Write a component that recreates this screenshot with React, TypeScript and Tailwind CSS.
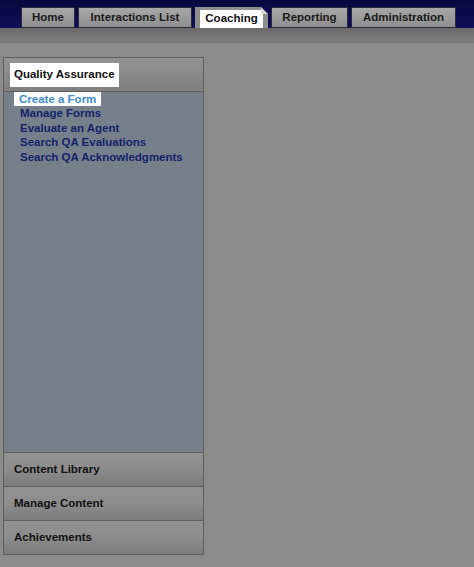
const tabs = [
  { label: 'Home', w: 'w-[54px]' },
  { label: 'Interactions List', w: 'w-[114px]' },
];

const tabsRight = [
  { label: 'Reporting', w: 'w-[77px]' },
  { label: 'Administration', w: 'w-[105px]' },
];

const links = [
  'Manage Forms',
  'Evaluate an Agent',
  'Search QA Evaluations',
  'Search QA Acknowledgments',
];

function Tab({ label, w }: { label: string; w: string }) {
  return (
    <div
      className={`${w} h-[21px] flex items-center justify-center border border-[#2a2a3a] bg-gradient-to-b from-[#a8a8a8] to-[#8e8e8e] text-[11.5px] font-bold text-[#1a1a1a]`}
    >
      {label}
    </div>
  );
}

function Section({ label }: { label: string }) {
  return (
    <div className="h-[34px] flex items-center pl-[10px] border-t border-[#5e5e5e] bg-gradient-to-b from-[#929292] via-[#8c8c8c] to-[#7c7c7c] text-[11.5px] font-bold text-[#111]">
      {label}
    </div>
  );
}

export default function App() {
  return (
    <div className="w-[474px] h-[567px] overflow-hidden bg-[#8b8b8b] font-['Liberation_Sans',Arial,sans-serif]">
      {/* Top navigation */}
      <header className="h-[28px] bg-gradient-to-b from-[#08083e] to-[#0e0e58] flex items-end pl-[21px]">
        <div className="flex items-end gap-[3px]">
          {tabs.map((t) => (
            <Tab key={t.label} {...t} />
          ))}
          <div className="relative w-[73px] h-[21px] bg-[#8e8e8e] flex justify-center items-end">
            <div className="w-[63px] h-[18px] bg-white flex items-center justify-center text-[11.5px] font-bold text-[#111]">
              Coaching
            </div>
            <div className="absolute top-0 right-0 w-0 h-0 border-t-[7px] border-t-[#0e0e58] border-l-[7px] border-l-[#d8d8d8]" />
          </div>
          {tabsRight.map((t) => (
            <Tab key={t.label} {...t} />
          ))}
        </div>
      </header>

      {/* Sub bar */}
      <div className="h-[15px] bg-gradient-to-b from-[#6a6a6a] to-[#7e7e7e] border-b border-[#767676]" />

      <div className="pt-[14px] pl-[3px]">
        <aside className="w-[201px] h-[498px] border border-[#5e5e5e] flex flex-col">
          {/* Active section header */}
          <div className="h-[34px] shrink-0 flex items-center pl-[6px] bg-gradient-to-b from-[#939393] to-[#7f7f7f] border-b border-[#5e5e5e]">
            <div className="h-[24px] px-[4px] bg-white flex items-center text-[11.5px] font-bold text-[#111]">
              Quality Assurance
            </div>
          </div>

          {/* Links */}
          <div className="flex-1 bg-[#76808a] pl-[10px] text-[11.5px] font-bold leading-[14.5px]">
            <div className="w-[87px] h-[14px] bg-white pl-[5px] text-[#3d8bd0] leading-[14px]">
              Create a Form
            </div>
            {links.map((l) => (
              <div key={l} className="pl-[6px] text-[#13236a]">
                {l}
              </div>
            ))}
          </div>

          <Section label="Content Library" />
          <Section label="Manage Content" />
          <Section label="Achievements" />
        </aside>
      </div>
    </div>
  );
}
